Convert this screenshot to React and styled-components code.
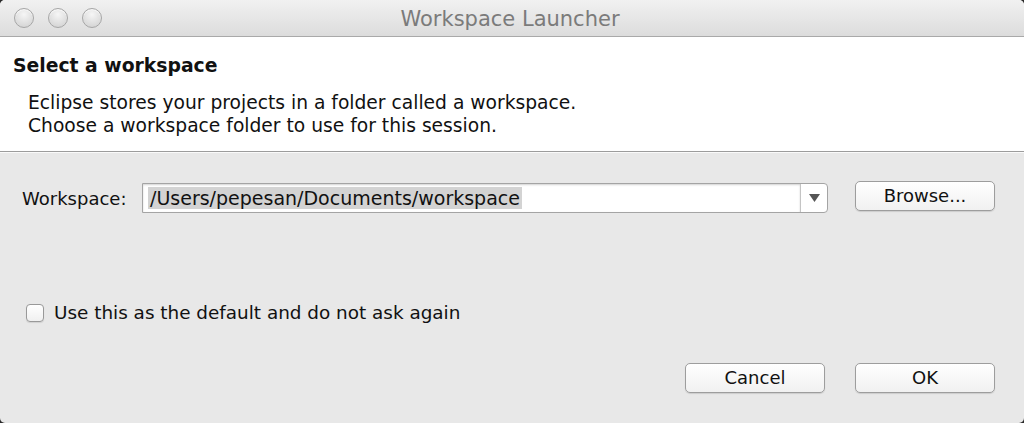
import React from "react";
import styled, { createGlobalStyle } from "styled-components";

const Global = createGlobalStyle`
  html, body {
    margin: 0;
    padding: 0;
    background: #2a2a2a;
  }
  body {
    font-family: "DejaVu Sans", "Liberation Sans", sans-serif;
    color: #111;
  }
`;

const Window = styled.div`
  width: 1024px;
  height: 423px;
  display: flex;
  flex-direction: column;
  background: #e8e8e8;
  border-radius: 5px;
  overflow: hidden;
`;

const TitleBar = styled.div`
  position: relative;
  height: 37px;
  flex: none;
  display: flex;
  align-items: center;
  justify-content: center;
  background: linear-gradient(#f1f1f1, #dcdcdc);
  border-bottom: 1px solid #a9a9a9;
  box-sizing: border-box;
`;

const Lights = styled.div`
  position: absolute;
  left: 14px;
  top: 8px;
  display: flex;
  gap: 14px;
`;

const Light = styled.span`
  width: 20px;
  height: 20px;
  border-radius: 50%;
  box-sizing: border-box;
  border: 1px solid #a6a6a6;
  background: radial-gradient(circle at 50% 30%, #f6f6f6 0%, #dadada 70%, #cfcfcf 100%);
  box-shadow: inset 0 1px 1px rgba(255, 255, 255, 0.8);
`;

const Title = styled.div`
  font-size: 21px;
  color: #7b7b7b;
  margin-top: 1px;
  margin-right: 4px;
`;

const Header = styled.div`
  flex: none;
  height: 115px;
  background: #ffffff;
  box-sizing: border-box;
  padding: 16px 13px 0;
  border-bottom: 1px solid #9c9c9c;
`;

const Heading = styled.div`
  font-weight: bold;
  font-size: 18.8px;
  line-height: 26px;
`;

const Description = styled.div`
  margin-top: 12px;
  padding-left: 15px;
  font-size: 18.7px;
  line-height: 23px;
`;

const Body = styled.div`
  flex: 1;
  display: flex;
  flex-direction: column;
  border-top: 1px solid #fafafa;
  padding: 28px 29px 30px 22px;
`;

const Row = styled.div`
  display: flex;
  align-items: center;
  height: 30px;
`;

const Label = styled.div`
  width: 120px;
  font-size: 18px;
  margin-top: 5px;
`;

const Combo = styled.div`
  flex: 1;
  height: 30px;
  display: flex;
  box-sizing: border-box;
  border: 1px solid #a4a4a4;
  border-radius: 0 4px 4px 0;
  background: #fff;
  margin-top: 3px;
`;

const ComboText = styled.div`
  flex: 1;
  display: flex;
  align-items: center;
  padding-left: 5px;
  box-shadow: inset 0 1px 2px rgba(0, 0, 0, 0.18);
`;

const Selected = styled.span`
  background: #d3d3d3;
  font-size: 19px;
  line-height: 22px;
  padding: 0 2px;
`;

const Arrow = styled.div`
  width: 26px;
  border-left: 1px solid #c4c4c4;
  display: flex;
  align-items: center;
  justify-content: center;
`;

const Button = styled.button`
  width: 140px;
  height: 30px;
  box-sizing: border-box;
  border: 1px solid #9d9d9d;
  border-radius: 5px;
  background: linear-gradient(#ffffff, #f1f1f1);
  box-shadow: 0 1px 1px rgba(0, 0, 0, 0.12);
  font-family: inherit;
  font-size: 18px;
  color: #111;
  padding: 0 0 1px;
  margin-left: ${(p) => p.$gap || 0}px;
`;

const CheckRow = styled.label`
  display: flex;
  align-items: center;
  margin-top: 92px;
  padding-left: 4px;
  font-size: 18.4px;
  height: 19px;
`;

const Box = styled.span`
  width: 18px;
  height: 18px;
  box-sizing: border-box;
  border: 1px solid #999;
  border-radius: 4px;
  background: linear-gradient(#ffffff, #f0f0f0);
  box-shadow: 0 1px 1px rgba(0, 0, 0, 0.1);
  margin-right: 10px;
`;

const Footer = styled.div`
  margin-top: auto;
  display: flex;
  justify-content: flex-end;
`;

export default function App() {
  return (
    <>
      <Global />
      <Window>
        <TitleBar>
          <Lights>
            <Light />
            <Light />
            <Light />
          </Lights>
          <Title>Workspace Launcher</Title>
        </TitleBar>
        <Header>
          <Heading>Select a workspace</Heading>
          <Description>
            Eclipse stores your projects in a folder called a workspace.
            <br />
            Choose a workspace folder to use for this session.
          </Description>
        </Header>
        <Body>
          <Row>
            <Label>Workspace:</Label>
            <Combo>
              <ComboText>
                <Selected>/Users/pepesan/Documents/workspace</Selected>
              </ComboText>
              <Arrow>
                <svg width="11" height="8" viewBox="0 0 11 8">
                  <path d="M0 0 L11 0 L5.5 8 Z" fill="#555" />
                </svg>
              </Arrow>
            </Combo>
            <Button $gap={27}>Browse...</Button>
          </Row>
          <CheckRow>
            <Box />
            Use this as the default and do not ask again
          </CheckRow>
          <Footer>
            <Button>Cancel</Button>
            <Button $gap={30}>OK</Button>
          </Footer>
        </Body>
      </Window>
    </>
  );
}
